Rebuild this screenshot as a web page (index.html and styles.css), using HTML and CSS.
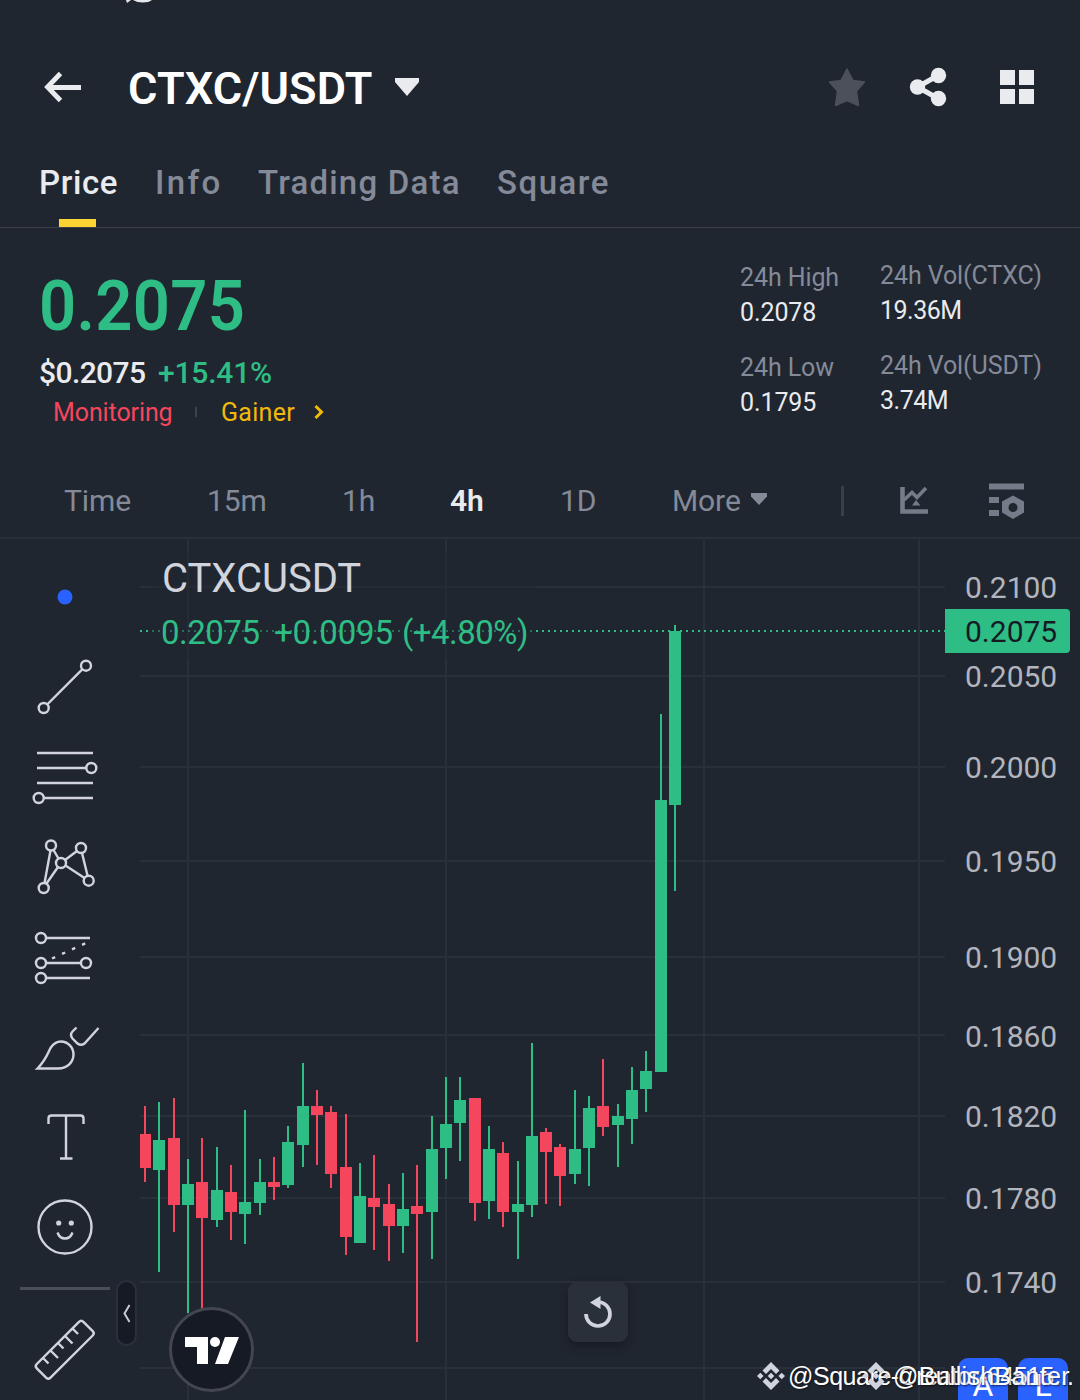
FILE: index.html
```html
<!DOCTYPE html>
<html lang="en">
<head>
    <meta charset="UTF-8">
    <meta name="viewport" content="width=device-width, initial-scale=1.0">
    <title>CTXC/USDT</title>
    <link rel="stylesheet" href="styles.css">
</head>
<body>
    <div class="screen">
        <header class="header">
            <svg class="status-mark" width="28" height="3" viewBox="0 0 28 3"><path d="M0 0h5l-4 3z M7 0h19q-3 2.500-9 2.500T7 0z" fill="#e6e7ea"/></svg>
            <svg class="back" width="38" height="32" viewBox="0 0 38 32"><path d="M16.500 2.500 3.500 16 16.500 29.500M3 16.500H37" fill="none" stroke="#eaebef" stroke-width="4.800"/></svg>
            <h1 class="pair">CTXC/USDT</h1>
            <svg class="pair-arrow" width="24" height="20" viewBox="0 0 24 20"><path d="M0 1h24v4L12 19 0 5z" fill="#eaebef"/></svg>
            <div class="header-icons">
                <svg width="38" height="40" viewBox="0 0 38 40"><path d="M19 2 25 13.500l11.500 1.500-8 9 2 14.500-11.500-5-11.500 5 2-14.500-8-9L13 13.500z" fill="#4c505b" stroke="#4c505b" stroke-width="1.500" stroke-linejoin="round"/></svg>
                <svg width="38" height="40" viewBox="0 0 38 40"><g fill="#eaebef"><circle cx="8.500" cy="20" r="7.700"/><circle cx="29.500" cy="8.500" r="7.700"/><circle cx="29.500" cy="31.500" r="7.700"/></g><path d="M29 8.500 8.500 20 29 31.500" fill="none" stroke="#eaebef" stroke-width="5"/></svg>
                <svg width="34" height="34" viewBox="0 0 34 34"><path d="M0 0h15v15H0zM19 0h15v15H19zM0 19h15v15H0zM19 19h15v15H19z" fill="#eaebef"/></svg>
            </div>
        </header>

        <nav class="tabs">
            <a class="tab tab-price active">Price</a>
            <a class="tab tab-info">Info</a>
            <a class="tab tab-data">Trading Data</a>
            <a class="tab tab-square">Square</a>
        </nav>

        <section class="ticker">
            <div class="quote">
                <div class="last-price">0.2075</div>
                <div class="fiat"><span class="usd">$0.2075</span><span class="change">+15.41%</span></div>
                <div class="tags">
                    <span class="tag-monitoring">Monitoring</span>
                    <span class="tag-line"></span>
                    <span class="tag-gainer">Gainer</span>
                    <svg width="10" height="16" viewBox="0 0 10 16"><path d="M1.500 2 7.500 8l-6 6" fill="none" stroke="#f0b90b" stroke-width="3"/></svg>
                </div>
            </div>
            <div class="stats stats-price">
                <div class="stat"><span class="stat-label">24h High</span><span class="stat-value">0.2078</span></div>
                <div class="stat"><span class="stat-label">24h Low</span><span class="stat-value">0.1795</span></div>
            </div>
            <div class="stats stats-vol">
                <div class="stat"><span class="stat-label">24h Vol(CTXC)</span><span class="stat-value">19.36M</span></div>
                <div class="stat"><span class="stat-label">24h Vol(USDT)</span><span class="stat-value">3.74M</span></div>
            </div>
        </section>

        <div class="intervals">
            <span>Time</span>
            <span>15m</span>
            <span>1h</span>
            <span class="selected">4h</span>
            <span>1D</span>
            <span class="more">More <svg width="16" height="12" viewBox="0 0 16 12"><path d="M0 0h16v3.500L8 12 0 3.500z" fill="#848a98"/></svg></span>
            <span class="bar"></span>
            <svg width="30" height="30" viewBox="0 0 30 30"><g fill="none" stroke="#757b88"><path d="M2.500 1v24.500H28" stroke-width="4.600"/><path d="M4 14 12 6.500l5 5L26 2" stroke-width="3.600"/></g><path d="M12 19.500 16 14l4.500 5.500z" fill="#757b88"/></svg>
            <svg width="36" height="36" viewBox="0 0 36 36"><path d="M0 .500h35v6H0zM0 14h10v6H0zM0 27h10v6H0z" fill="#757b88"/><path fill-rule="evenodd" d="M24 12.500 35 18.500v11L24 36l-11-6.500v-11zM24 20a4.500 4.500 0 1 0 0 9 4.500 4.500 0 0 0 0-9z" fill="#757b88"/></svg>
        </div>

        <main class="chart">
            <aside class="tools">
                <svg class="tool" viewBox="0 0 90 90"><circle cx="45" cy="45" r="7.500" fill="#2962ff"/></svg>
                <svg class="tool line-icon" viewBox="0 0 90 90"><circle cx="66" cy="23.700" r="5"/><circle cx="23.700" cy="66" r="5"/><path d="M62.500 27.200 27.200 62.500"/></svg>
                <svg class="tool line-icon" viewBox="0 0 90 90"><path d="M17 21h56M17 36h49M17 51h56M24 66h49"/><circle cx="71.300" cy="36" r="5"/><circle cx="18.700" cy="66" r="5"/></svg>
                <svg class="tool line-icon" viewBox="0 0 90 90"><circle cx="31" cy="23.500" r="5"/><circle cx="61" cy="26" r="5"/><circle cx="41" cy="41" r="5"/><circle cx="23.700" cy="66" r="5"/><circle cx="68.700" cy="58.700" r="5"/><path d="M30.500 28.500 24.500 61M33.500 28l5 8.500M45 38l12-9M62 31l5.500 22.500M45.500 43.500 64.500 56M38 45 26.500 61.500"/></svg>
                <svg class="tool line-icon" viewBox="0 0 90 90"><circle cx="21" cy="26" r="5"/><circle cx="21" cy="51" r="5"/><circle cx="66" cy="51" r="5"/><circle cx="21" cy="66" r="5"/><path d="M26 26h44M26 51h35M26 66h44"/><path d="M32 46.500 66 31" stroke-dasharray="3.500 7.500"/></svg>
                <svg class="tool line-icon" viewBox="0 0 90 90"><path d="M56.500 25.500l-4 4q-3 3.500 0 7l5 5q3.500 2.500 7 0l14-15.500M17.500 66.500C26 58 28 51 30.500 46c3-4.500 6-6.500 10.500-6.500 7 0 12.500 6 12.500 13S48 66.500 38 66.500z"/></svg>
                <svg class="tool line-icon" viewBox="0 0 90 90"><path d="M28.500 32v-5.500q0-3 3-3h29q3 0 3 3V32M46 24v42M40 66.500h12.500"/></svg>
                <svg class="tool line-icon" viewBox="0 0 90 90"><circle cx="45" cy="45" r="26.500"/><path d="M37.500 50.500q2 6 7.500 6t7.500-6"/><g class="solid"><circle cx="38.700" cy="41" r="2.600"/><circle cx="51.300" cy="41" r="2.600"/></g></svg>
                <div class="tools-divider"></div>
                <svg class="tool line-icon" viewBox="0 0 90 90"><path d="M16.800 59 59 16.800q2.200-2.200 4.400 0l9.300 9.300q2.200 2.200 0 4.400L30.500 72.700q-2.200 2.200-4.400 0l-9.300-9.300q-2.200-2.200 0-4.400zM23.500 53.500l5 5M31 46l7 7M38.500 38.500l5 5M45.500 31.500l7 7M53 24l5 5"/></svg>
            </aside>

            <div class="plot">
                <svg class="candles" width="805" height="860" viewBox="140 540 805 860">
                    <path class="grid" d="M140 587H945M140 676H945M140 767H945M140 861H945M140 957H945M140 1035H945M140 1116H945M140 1198H945M140 1282H945M140 1368H945M188 540V1400M446 540V1400M704 540V1400M919 540V1400"/>
                    <path class="last-line" d="M140 631H945"/>
                    <!-- wicks -->
                    <path class="down wick" d="M145 1106V1182M174 1098V1232M202 1138V1312M231 1165V1240M274 1157V1200M317 1090V1165M331 1106V1188M346 1114V1255M374 1155V1250M389 1184V1261M417 1165V1342M475 1098V1221M503 1142V1227M546 1128V1204M560 1144V1206M603 1059V1136"/>
                    <path class="up wick" d="M159 1102V1272M188 1159V1313M217 1147V1227M245 1110V1244M260 1159V1215M288 1126V1188M303 1063V1167M360 1163V1243M403 1173V1253M432 1116V1259M446 1077V1179M460 1077V1161M489 1126V1219M518 1161V1259M532 1043V1217M575 1090V1184M589 1096V1186M618 1104V1167M632 1067V1144M646 1051V1112M661 714V1072M675 625V891"/>
                    <!-- bodies -->
                    <path class="down body" d="M145 1134V1168M174 1138V1205M202 1182V1218M231 1192V1212M274 1182V1187M317 1106V1115M331 1112V1174M346 1167V1237M374 1198V1207M389 1204V1226M417 1206V1214M475 1098V1203M503 1153V1212M546 1132V1152M560 1147V1176M603 1106V1127"/>
                    <path class="up body" d="M159 1140V1170M188 1184V1205M217 1190V1220M245 1202V1214M260 1182V1203M288 1142V1185M303 1106V1145M360 1196V1243M403 1209V1226M432 1149V1212M446 1124V1148M460 1100V1123M489 1149V1201M518 1204V1212M532 1136V1205M575 1149V1174M589 1108V1148M618 1116V1125M632 1090V1119M646 1071V1089M661 800V1072M675 631V805"/>
                </svg>
                <div class="legend">
                    <div class="legend-name">CTXCUSDT</div>
                    <div class="legend-values"><span>0.2075</span><span>+0.0095</span><span>(+4.80%)</span></div>
                </div>
            </div>

            <svg class="axis" width="135" height="860" viewBox="945 540 135 860">
                <text x="965" y="598">0.2100</text>
                <text x="965" y="687">0.2050</text>
                <text x="965" y="778">0.2000</text>
                <text x="965" y="872">0.1950</text>
                <text x="965" y="968">0.1900</text>
                <text x="965" y="1047">0.1860</text>
                <text x="965" y="1127">0.1820</text>
                <text x="965" y="1209">0.1780</text>
                <text x="965" y="1293">0.1740</text>
                <path d="M945 609H1066q4 0 4 4V649q0 4-4 4H945z" fill="#2ebd85"/>
                <text class="axis-last" x="965" y="642">0.2075</text>
            </svg>

            <div class="collapse"><svg width="8" height="19" viewBox="0 0 8 19"><path d="M6.500 1 1.500 9.500l5 8.500" fill="none" stroke="#c8cad3" stroke-width="2"/></svg></div>
            <div class="tv-logo"><svg width="54" height="27" viewBox="0 0 54 27"><path d="M0 0h23v27H12V10H0zM40 0h14L43 27H30z" fill="#fff"/><circle cx="30" cy="5" r="5" fill="#fff"/></svg></div>
            <div class="reset"><svg width="30" height="34" viewBox="0 0 30 34"><path d="M3 19A12 12 0 1 0 15 7" fill="none" stroke="#d1d4dc" stroke-width="3.700"/><path d="M7 7.500 17.500 1v13z" fill="#d1d4dc"/></svg></div>
            <div class="scale-btn scale-auto">A</div>
            <div class="scale-btn scale-log">L</div>
            <div class="mark mark-first">
                <svg width="28" height="28" viewBox="0 0 28 28"><path d="M14 0 22.500 8.500 19 12l-5-5-5 5-3.500-3.500zM14 28l8.500-8.500L19 16l-5 5-5-5-3.500 3.500zM14 10.700l3.300 3.300-3.300 3.300-3.300-3.300zM3.300 10.700 6.600 14l-3.300 3.300L0 14zM24.700 10.700 28 14l-3.300 3.300-3.300-3.300z" fill="#d1d4dc"/></svg>
                <span>@Square-Creator-64515...</span>
            </div>
            <div class="mark mark-second">
                <svg width="28" height="28" viewBox="0 0 28 28"><path d="M14 0 22.500 8.500 19 12l-5-5-5 5-3.500-3.500zM14 28l8.500-8.500L19 16l-5 5-5-5-3.500 3.500zM14 10.700l3.300 3.300-3.300 3.300-3.300-3.300zM3.300 10.700 6.600 14l-3.300 3.300L0 14zM24.700 10.700 28 14l-3.300 3.300-3.300-3.300z" fill="#d1d4dc"/></svg>
                <span>@BullishBanter</span>
            </div>
        </main>
    </div>
</body>
</html>
```
FILE: styles.css
```css
* {
    box-sizing: border-box;
}

body {
    margin: 0;
    background: #202630;
    color: #eaebef;
    font-family: "Roboto", "Liberation Sans", sans-serif;
}

svg {
    display: block;
}

.screen {
    width: 1080px;
    height: 1400px;
    overflow: hidden;
}

/* header */
.header {
    position: relative;
    display: flex;
    align-items: center;
    height: 136px;
    padding: 38px 46px 0 44px;
}

.status-mark {
    position: absolute;
    top: 0;
    left: 126px;
}

.pair {
    margin: 3px 0 0 46px;
    width: 249px;
    white-space: nowrap;
    font-size: 45px;
    line-height: 56px;
    font-weight: 600;
    letter-spacing: 0.1px;
    color: #ffffff;
}

.pair-arrow {
    margin-left: 18px;
}

.header-icons {
    display: flex;
    align-items: center;
    margin-left: auto;
}

.header-icons svg:nth-child(2) {
    margin: 0 53px 0 43px;
}

/* tabs */
.tabs {
    display: flex;
    height: 92px;
    padding-left: 39px;
    border-bottom: 1px solid #393e48;
}

.tab {
    position: relative;
    font-size: 33px;
    line-height: 94px;
    font-weight: 500;
    color: #848a98;
    white-space: nowrap;
    letter-spacing: 1.2px;
}

.tab-price {
    width: 116px;
    letter-spacing: 0.6px;
}

.tab-info {
    width: 103px;
    letter-spacing: 2.4px;
}

.tab-data {
    width: 239px;
}

.tab-square {
    letter-spacing: 1.5px;
}

.tab.active {
    color: #eaebef;
}

.tab.active::after {
    content: "";
    position: absolute;
    left: 20px;
    top: 83px;
    width: 37px;
    height: 8px;
    background: #fcd535;
}

/* price and 24h numbers */
.ticker {
    display: flex;
    height: 239px;
    padding-top: 31px;
}

.quote {
    width: 740px;
    padding-left: 39px;
}

/* condensed a little, the digits are tall and narrow */
.last-price {
    margin-top: 12px;
    height: 70px;
    font-size: 70px;
    line-height: 70px;
    font-weight: 600;
    letter-spacing: 0.3px;
    color: #2ebd85;
    transform: scaleX(0.93);
    transform-origin: left;
}

.fiat {
    display: flex;
    font-size: 30px;
    line-height: 40px;
    margin-top: 12px;
    font-weight: 500;
    letter-spacing: -0.6px;
}

.usd {
    width: 119px;
}

.change {
    color: #2ebd85;
    letter-spacing: -0.2px;
}

.tags {
    display: flex;
    align-items: center;
    height: 38px;
    padding-left: 14px;
    font-size: 25px;
}

.tag-monitoring {
    width: 142px;
    letter-spacing: -0.1px;
    color: #f6465d;
}

.tag-line {
    width: 2px;
    height: 10px;
    margin-right: 24px;
    background: #3c424d;
}

.tag-gainer {
    width: 93px;
    letter-spacing: 0.3px;
    color: #f0b90b;
}

.stats {
    font-size: 25px;
    line-height: 35px;
    white-space: nowrap;
    margin-top: -1px;
    letter-spacing: -0.1px;
}

.stats-price {
    width: 140px;
    padding-top: 2px;
}

.stat {
    height: 90px;
}

.stat span {
    display: block;
}

.stat-label {
    color: #848a98;
}

.stat-value {
    color: #eaebef;
}

.stats-vol .stat-value {
    letter-spacing: -0.5px;
}

/* interval row */
.intervals {
    display: grid;
    grid-template-columns: 143px 135px 108px 110px 112px 169px 59px 89px 36px;
    align-items: center;
    height: 72px;
    padding: 0 0 3px 64px;
    border-bottom: 2px solid #2a303a;
    font-size: 30px;
    letter-spacing: -0.1px;
    color: #848a98;
}

.intervals .selected {
    color: #eaebef;
    font-weight: 600;
}

.more {
    display: flex;
    align-items: center;
    gap: 10px;
}

.more svg {
    margin-top: -3px;
}

.bar {
    width: 3px;
    height: 30px;
    background: #393f4a;
}

/* chart */
.chart {
    position: relative;
    display: grid;
    grid-template-columns: 140px 805px 135px;
    height: 861px;
}

.tools {
    padding: 13px 0 0 20px;
}

.tool {
    width: 90px;
    height: 90px;
}

.line-icon {
    fill: none;
    stroke: #d1d4dc;
    stroke-width: 2.4px;
}

.line-icon .solid {
    fill: #d1d4dc;
    stroke: none;
}

.tools-divider {
    width: 90px;
    height: 3px;
    margin: 15px 0;
    background: #4a4e59;
}

.plot {
    position: relative;
    padding-top: 1px;
}

.candles path {
    fill: none;
}

.candles .grid {
    stroke: #2a303a;
    stroke-width: 2px;
}

.candles .last-line {
    stroke: #2ebd85;
    stroke-width: 2px;
    stroke-dasharray: 2 4;
}

.candles .wick {
    stroke-width: 2px;
}

.candles .body {
    stroke-width: 12px;
}

.candles .up {
    stroke: #2ebd85;
}

.candles .down {
    stroke: #f6465d;
}

/* legend lies over the grid and dims it */
.legend {
    position: absolute;
    top: 12px;
    left: 11px;
    width: 384px;
    padding-left: 10px;
    background: rgba(32, 38, 48, 0.5);
}

.legend-name {
    padding-left: 1px;
    font-size: 40px;
    line-height: 56px;
    color: #d1d4dc;
}

.legend-values {
    display: flex;
    font-size: 33px;
    line-height: 52px;
    letter-spacing: -0.5px;
    color: #2ebd85;
}

.legend-values span:nth-child(1) {
    width: 113px;
}

.legend-values span:nth-child(2) {
    width: 128px;
    letter-spacing: -0.2px;
}

.axis {
    margin-top: 1px;
    font-size: 30px;
}

.axis text {
    fill: #b2b5be;
}

.axis .axis-last {
    fill: #161a25;
}

/* controls over the plot */
.collapse {
    position: absolute;
    left: 116px;
    top: 741px;
    width: 21px;
    height: 66px;
    display: flex;
    align-items: center;
    justify-content: center;
    border: 2px solid #2a303b;
    border-radius: 11px;
    background: #161a25;
}

.tv-logo {
    position: absolute;
    left: 169px;
    top: 768px;
    width: 85px;
    height: 85px;
    display: flex;
    align-items: center;
    justify-content: center;
    border: 3px solid #434651;
    border-radius: 50%;
    background: #161a25;
}

.tv-logo svg {
    margin-top: 2px;
}

.reset {
    position: absolute;
    left: 568px;
    top: 743px;
    width: 60px;
    height: 60px;
    display: flex;
    align-items: center;
    justify-content: center;
    border-radius: 9px;
    background: #2a303a;
    box-shadow: 0 4px 8px rgba(16, 18, 28, 0.6);
}

.scale-btn {
    position: absolute;
    top: 819px;
    width: 50px;
    height: 42px;
    border-radius: 10px 10px 0 0;
    background: #2962ff;
    color: #ffffff;
    font-size: 32px;
    line-height: 54px;
    text-align: center;
}

.scale-auto {
    left: 958px;
}

.scale-log {
    left: 1018px;
}

.mark {
    position: absolute;
    top: 823px;
    display: flex;
    align-items: center;
    height: 28px;
    gap: 3px;
    color: #ffffff;
    font-family: "Liberation Sans", Arial, sans-serif;
    font-size: 25px;
    white-space: nowrap;
    text-shadow: 1px 1px 2px rgba(0, 0, 0, 0.5);
}

.mark-first {
    left: 757px;
    letter-spacing: -0.45px;
}

.mark-second {
    left: 862px;
    letter-spacing: 0.3px;
}
```
